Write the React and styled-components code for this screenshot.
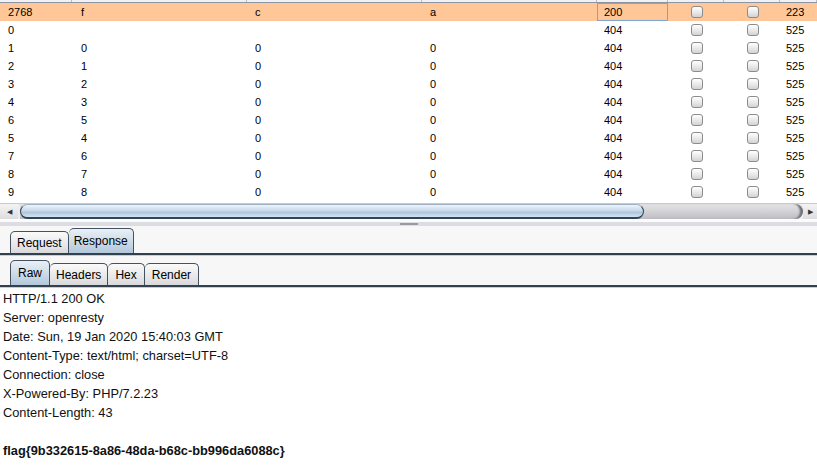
import styled, { createGlobalStyle } from "styled-components";

const GlobalStyle = createGlobalStyle`
  html, body {
    margin: 0;
    padding: 0;
    overflow: hidden;
    background: #ffffff;
  }
  * { box-sizing: border-box; }
`;

const columns = "72px 175px 175px 175px 71px 56px 56px 1fr";

const rows = [
  { id: "2768", payload: "f", c3: "c", c4: "a", status: "200", len: "223", selected: true },
  { id: "0", payload: "", c3: "", c4: "", status: "404", len: "525" },
  { id: "1", payload: "0", c3: "0", c4: "0", status: "404", len: "525" },
  { id: "2", payload: "1", c3: "0", c4: "0", status: "404", len: "525" },
  { id: "3", payload: "2", c3: "0", c4: "0", status: "404", len: "525" },
  { id: "4", payload: "3", c3: "0", c4: "0", status: "404", len: "525" },
  { id: "6", payload: "5", c3: "0", c4: "0", status: "404", len: "525" },
  { id: "5", payload: "4", c3: "0", c4: "0", status: "404", len: "525" },
  { id: "7", payload: "6", c3: "0", c4: "0", status: "404", len: "525" },
  { id: "8", payload: "7", c3: "0", c4: "0", status: "404", len: "525" },
  { id: "9", payload: "8", c3: "0", c4: "0", status: "404", len: "525" },
];

const responseLines = [
  "HTTP/1.1 200 OK",
  "Server: openresty",
  "Date: Sun, 19 Jan 2020 15:40:03 GMT",
  "Content-Type: text/html; charset=UTF-8",
  "Connection: close",
  "X-Powered-By: PHP/7.2.23",
  "Content-Length: 43",
];

const Page = styled.div`
  width: 817px;
  height: 468px;
  display: flex;
  flex-direction: column;
  font-family: "Liberation Sans", Arial, sans-serif;
  color: #000;
  background: #f7f7f7;
  overflow: hidden;
`;

const TablePane = styled.section`
  background: #fff;
  height: 220px;
  display: flex;
  flex-direction: column;
`;

const HeaderStrip = styled.div`
  display: grid;
  grid-template-columns: ${columns};
  height: 3px;
  border-bottom: 1px solid #8d94a3;
  background: #f2f2f5;
`;

const HeaderCell = styled.div`
  border-right: 1px solid #b9bdc8;
`;

const Row = styled.div`
  display: grid;
  grid-template-columns: ${columns};
  height: 18px;
  background: ${(p) => (p.$selected ? "#ffc797" : "#fff")};
  font-size: 11px;
`;

const Cell = styled.div`
  display: flex;
  align-items: center;
  padding-left: ${(p) => p.$pad || 7}px;
  border: 1px solid ${(p) => (p.$focus ? "#7fa4d0" : "transparent")};
  white-space: nowrap;
`;

const BoxCell = styled.div`
  display: flex;
  align-items: center;
  justify-content: center;
  padding-left: 2px;
`;

const Check = styled.span`
  width: 12px;
  height: 12px;
  border: 1px solid #8c8c8c;
  border-radius: 3px;
  background: linear-gradient(#ffffff, #e6e6e6 60%, #d2d2d2);
`;

const Scrollbar = styled.div`
  display: flex;
  height: 16px;
  margin-top: 2px;
  border-top: 1px solid #c9c9cf;
  background: #ececee;
`;

const ArrowButton = styled.div`
  width: ${(p) => p.$w}px;
  display: flex;
  align-items: center;
  justify-content: center;
  font-size: 7px;
  color: #333;
  background: linear-gradient(#f3f3f3, #dedede);
`;

const Track = styled.div`
  flex: 1;
  display: flex;
  margin-left: 2px;
  border-radius: 0 8px 8px 0;
  background: linear-gradient(#e4e4e6, #d0d0d4 55%, #bdbdc2);
  box-shadow: inset -4px 0 2px -1px #6f6f76;
`;

const Thumb = styled.div`
  height: 100%;
  border-radius: 8px;
  border: 1px solid #2e4457;
  border-top-color: #9fb2c4;
  border-bottom-width: 2px;
  background: linear-gradient(#eef4fa, #c4d7e9 50%, #adc5db 60%, #d3e3f1);
`;

const Splitter = styled.div`
  height: 6px;
  display: flex;
  justify-content: center;
  border-top: 2px solid #fbfbfb;
  background: #dcdce2;
`;

const Grip = styled.div`
  width: 18px;
  height: 2px;
  margin-top: 1px;
  background: #9a9aa2;
`;

const TabBar = styled.div`
  display: flex;
  align-items: flex-end;
  padding-left: 10px;
  margin-top: ${(p) => p.$top}px;
  border-bottom: 2px solid #33414f;
  box-shadow: 0 1px 0 #c9ced6;
`;

const Tab = styled.div`
  height: ${(p) => (p.$active ? 25 : 22)}px;
  padding: 0 ${(p) => p.$pad || 6}px;
  display: flex;
  align-items: center;
  font-size: 12px;
  border: 1px solid #44515e;
  border-bottom: none;
  border-left-width: ${(p) => (p.$first ? 1 : 0)}px;
  border-radius: 5px 5px 0 0;
  background: ${(p) =>
    p.$active
      ? "linear-gradient(#e9f0f6, #c3d4e4 70%, #b2c7da)"
      : "linear-gradient(#fafafa, #e4e4e6 70%, #d9d9dc)"};
`;

const Body = styled.div`
  flex: 1;
  background: #fff;
  padding: 1px 3px 0;
  margin-top: 1px;
  font-size: 12.8px;
  line-height: 19px;
  color: #111;
`;

const Line = styled.div`
  height: 19px;
  white-space: pre;
  font-weight: ${(p) => (p.$bold ? 700 : 400)};
`;

export default function App() {
  return (
    <>
      <GlobalStyle />
      <Page>
        <TablePane>
          <HeaderStrip>
            {Array.from({ length: 8 }).map((_, i) => (
              <HeaderCell key={i} />
            ))}
          </HeaderStrip>
          {rows.map((r, i) => (
            <Row key={i} $selected={r.selected}>
              <Cell $pad={7}>{r.id}</Cell>
              <Cell $pad={8}>{r.payload}</Cell>
              <Cell>{r.c3}</Cell>
              <Cell>{r.c4}</Cell>
              <Cell $pad={6} $focus={r.selected}>{r.status}</Cell>
              <BoxCell>
                <Check />
              </BoxCell>
              <BoxCell>
                <Check />
              </BoxCell>
              <Cell $pad={5}>{r.len}</Cell>
            </Row>
          ))}
          <Scrollbar>
            <ArrowButton $w={18}>◀</ArrowButton>
            <Track>
              <Thumb style={{ width: 624 }} />
            </Track>
            <ArrowButton $w={14}>▶</ArrowButton>
          </Scrollbar>
        </TablePane>
        <Splitter>
          <Grip />
        </Splitter>
        <TabBar $top={2}>
          <Tab $first $pad={6}>Request</Tab>
          <Tab $active $pad={5}>Response</Tab>
        </TabBar>
        <TabBar $top={5}>
          <Tab $first $active $pad={7}>Raw</Tab>
          <Tab $pad={6}>Headers</Tab>
          <Tab $pad={7}>Hex</Tab>
          <Tab $pad={7}>Render</Tab>
        </TabBar>
        <Body>
          {responseLines.map((l) => (
            <Line key={l}>{l}</Line>
          ))}
          <Line> </Line>
          <Line $bold>flag{"{"}9b332615-8a86-48da-b68c-bb996da6088c{"}"}</Line>
        </Body>
      </Page>
    </>
  );
}
